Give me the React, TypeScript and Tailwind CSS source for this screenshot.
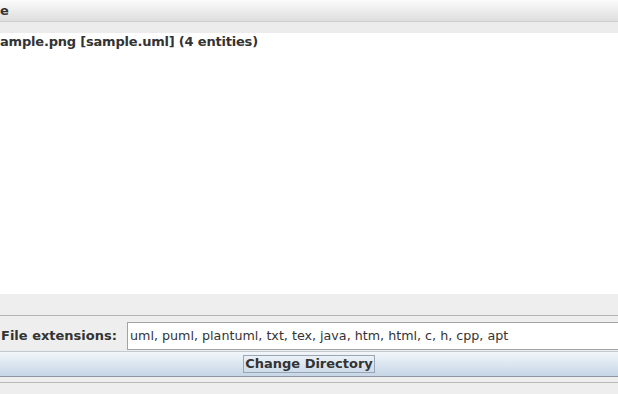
export default function App() {
  return (
    <div className="flex h-[394px] w-[618px] flex-col overflow-hidden bg-[#eeeeee] font-['DejaVu_Sans',sans-serif] text-[13px] text-[#333333]">
      {/* title bar */}
      <div className="flex h-[21px] shrink-0 items-center bg-gradient-to-b from-[#fbfbfb] to-[#dedede] font-bold">
        <span className="leading-none">e</span>
      </div>
      <div className="h-px shrink-0 bg-[#cfcfcf]" />
      <div className="h-[11px] shrink-0 bg-[#ececec]" />

      {/* entity list */}
      <div className="h-[261px] shrink-0 bg-white">
        <div className="flex h-[17px] items-center font-bold tracking-[-0.2px]">ample.png [sample.uml] (4 entities)</div>
      </div>

      <div className="h-[21px] shrink-0 bg-[#eeeeee]" />
      <div className="h-px shrink-0 bg-[#b4b4b4]" />

      {/* extensions row */}
      <div className="flex h-[35px] shrink-0 items-center pt-[5px]">
        <span className="w-[127px] shrink-0 pl-[1px] font-bold">File extensions:</span>
        <div className="flex h-[28px] flex-1 items-center border border-[#a3a3a3] border-r-0 bg-white pl-[2px] text-[12.7px] text-[#333333]">
          uml, puml, plantuml, txt, tex, java, htm, html, c, h, cpp, apt
        </div>
      </div>

      {/* button bar */}
      <div className="flex h-[26px] shrink-0 items-center justify-center border-t border-b border-t-[#c2c9d2] border-b-[#8c98a4] bg-gradient-to-b from-[#f2f6fa] to-[#c6d6e6]">
        <span className="border border-[#9aa6b4] px-[1px] leading-[16px] font-bold">Change Directory</span>
      </div>

      <div className="h-[5px] shrink-0" />
      <div className="h-px shrink-0 bg-[#b8b8b8]" />
    </div>
  );
}
